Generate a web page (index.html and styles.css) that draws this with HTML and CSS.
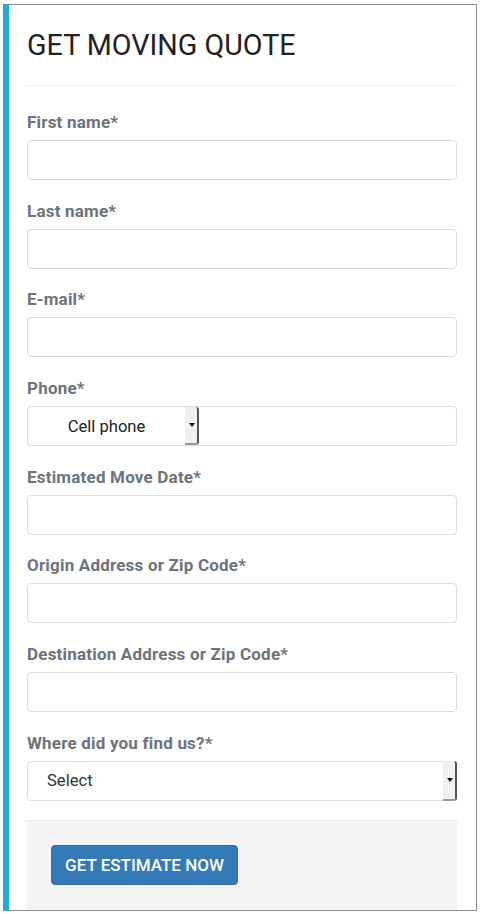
FILE: index.html
```html
<!DOCTYPE html>
<html lang="en">
<head>
<meta charset="utf-8">
<title>Get Moving Quote</title>
<link rel="stylesheet" href="styles.css">
</head>
<body>
<div class="panel">
  <h1 class="title">GET MOVING QUOTE</h1>
  <hr class="sep">
  <form class="form">
    <div class="group">
      <label class="label">First name*</label>
      <div class="input"></div>
    </div>
    <div class="group">
      <label class="label">Last name*</label>
      <div class="input"></div>
    </div>
    <div class="group">
      <label class="label">E-mail*</label>
      <div class="input"></div>
    </div>
    <div class="group">
      <label class="label">Phone*</label>
      <div class="input phone">
        <div class="select phone-select">
          <span class="select-text center">Cell phone</span>
          <span class="select-arrow"></span>
        </div>
      </div>
    </div>
    <div class="group">
      <label class="label">Estimated Move Date*</label>
      <div class="input"></div>
    </div>
    <div class="group">
      <label class="label">Origin Address or Zip Code*</label>
      <div class="input"></div>
    </div>
    <div class="group">
      <label class="label">Destination Address or Zip Code*</label>
      <div class="input"></div>
    </div>
    <div class="group last">
      <label class="label">Where did you find us?*</label>
      <div class="input select full">
        <span class="select-text">Select</span>
        <span class="select-arrow"></span>
      </div>
    </div>
    <div class="footer">
      <button type="button" class="btn">GET ESTIMATE NOW</button>
    </div>
  </form>
</div>
</body>
</html>
```
FILE: styles.css
```css
html, body {
  margin: 0;
  padding: 0;
  background: #fff;
}
body {
  font-family: Roboto, "Liberation Sans", Arial, sans-serif;
}
.panel {
  box-sizing: border-box;
  margin: 4px 0 0 3px;
  width: 474px;
  height: 907px;
  border-left: 6px solid #1aade4;
  border-top: 1px solid #8c8c8c;
  border-right: 1px solid #8c8c8c;
  border-bottom: 1px solid #8c8c8c;
  padding: 0 19px 0 18px;
  overflow: hidden;
}
.title {
  margin: 24px 0 0;
  font-size: 28.7px;
  line-height: 33px;
  font-weight: 400;
  color: #222;
}
.sep {
  margin: 23px 0 0;
  border: 0;
  border-top: 1px solid #eeeeee;
  height: 0;
}
.form {
  margin-top: 26px;
}
.group {
  display: flex;
  flex-direction: column;
  margin-bottom: 20.7px;
}
.group.last {
  margin-bottom: 19px;
}
.label {
  font-size: 17px;
  line-height: 20px;
  font-weight: 700;
  letter-spacing: 0.2px;
  color: #6c737c;
  margin-bottom: 8px;
}
.input {
  box-sizing: border-box;
  height: 40px;
  border: 1px solid #dcdcdc;
  border-radius: 4px;
  background: #fff;
}
.phone {
  display: flex;
}
.select {
  display: flex;
  align-items: stretch;
  box-sizing: border-box;
  font-size: 16.6px;
  color: #222;
}
.phone-select {
  width: 172px;
  margin-left: -1px;
  margin-top: -1px;
  height: 40px;
  border: 1px solid #dcdcdc;
  border-radius: 4px 0 0 4px;
  border-right: 0;
}
.select-text {
  flex: 1;
  display: flex;
  align-items: center;
  padding-left: 19px;
  color: #333;
}
.select-text.center {
  justify-content: center;
  padding-left: 0;
  color: #222;
}
.select-arrow {
  position: relative;
  width: 12px;
  background: #f0f0f0;
  border-right: 2px solid #555;
  border-bottom: 2px solid #9a9a9a;
  border-radius: 0 3px 3px 0;
}
.select-arrow::after {
  content: "";
  position: absolute;
  left: 4px;
  top: 50%;
  margin-top: -2px;
  border-left: 3px solid transparent;
  border-right: 3px solid transparent;
  border-top: 4px solid #111;
}
.full .select-arrow {
  margin: -1px -1px -1px 0;
}
.footer {
  border-top: 1px solid #e6e9ec;
  background: #f4f4f4;
  padding: 24px 24px 40px;
}
.btn {
  display: block;
  width: 187px;
  height: 40px;
  background: #337ab7;
  border: 1px solid #2e6da4;
  border-radius: 4px;
  color: #fff;
  font-family: Roboto, "Liberation Sans", Arial, sans-serif;
  font-size: 17px;
  font-weight: 500;
  padding: 0;
}
```
